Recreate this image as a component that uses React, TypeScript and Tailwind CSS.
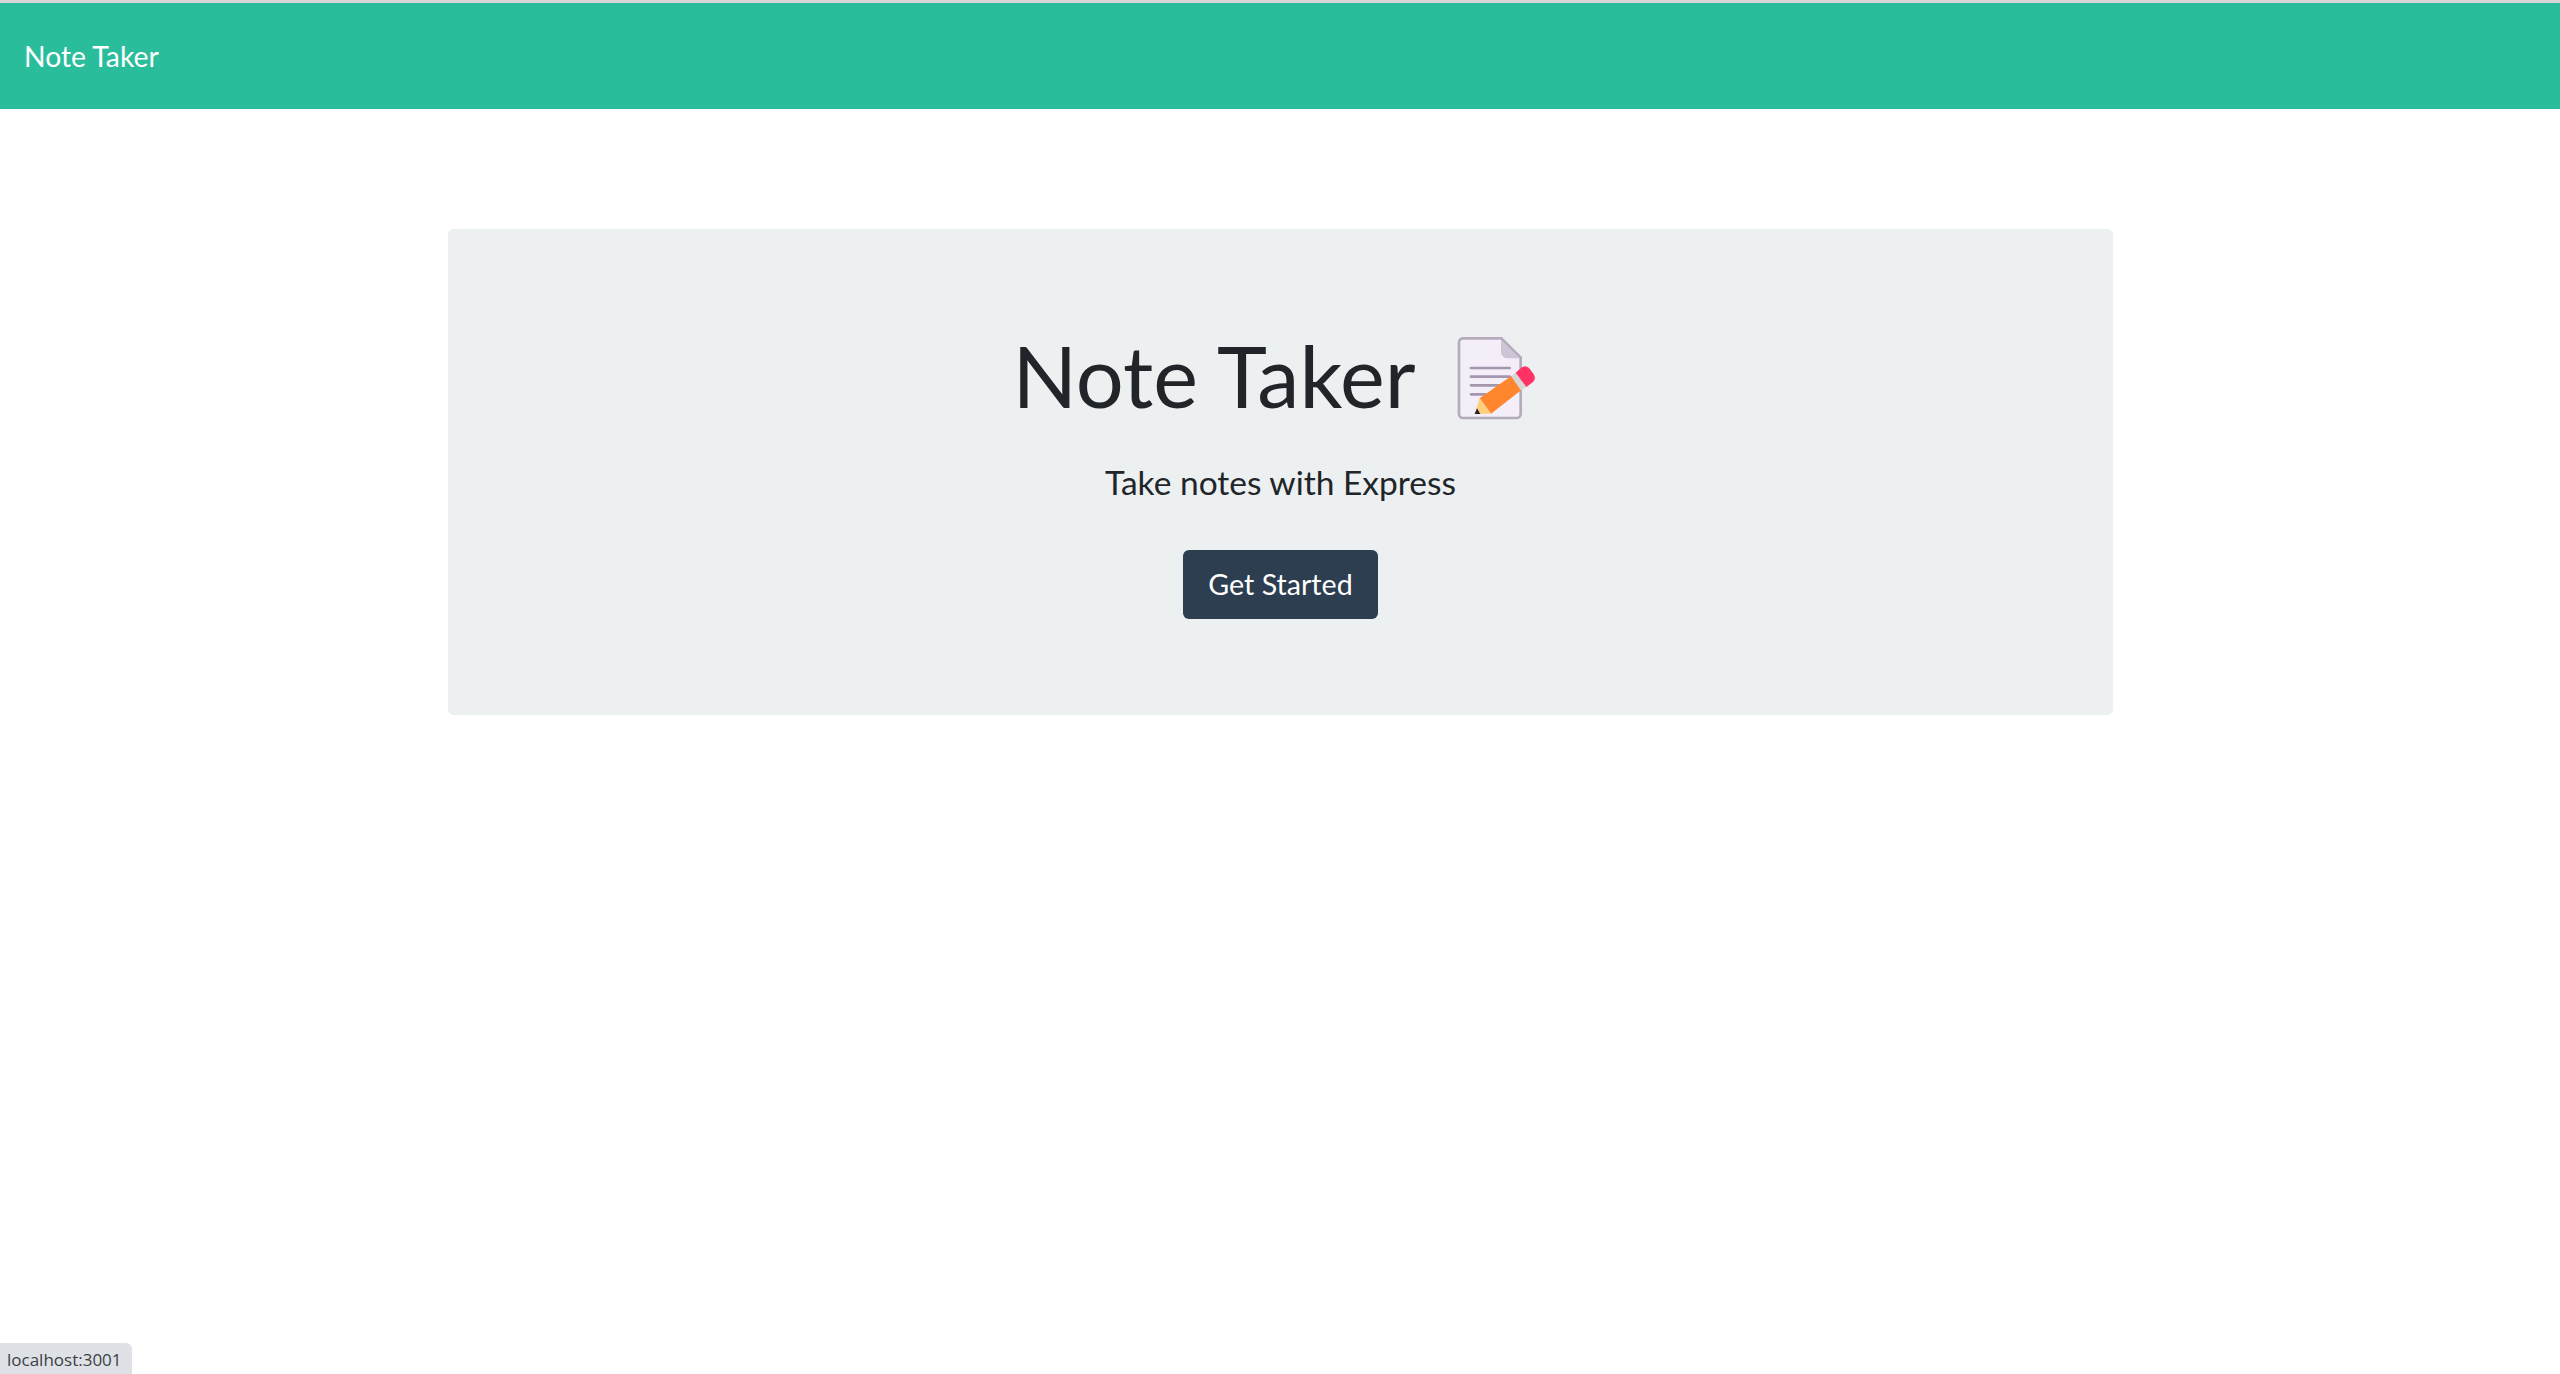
export default function App() {
  return (
    <div className="min-h-screen bg-white font-['Lato',sans-serif]">
      <nav className="flex h-[109px] items-center border-t-[3px] border-[#d6d6d6] bg-[#2abd9c] pl-[24px]">
        <span className="text-[28.3px] leading-none text-white">Note Taker</span>
      </nav>
      <main className="pr-[447px] pl-[448px] pt-[120px]">
        <section className="flex h-[486px] flex-col items-center rounded-[6px] bg-[#ecf0f1] pt-[90px]">
          <h1 className="flex h-[112px] items-center text-[84.7px] leading-none font-normal text-[#212529]">
            <span>Note Taker</span>
            <svg className="mt-[6px] mr-[12px] ml-[41px] h-[85px] w-[80px]" viewBox="80 45 240 255" aria-hidden="true">
              <path d="M98 52 H213 L271 110 V279 a12 12 0 0 1 -12 12 H98 a12 12 0 0 1 -12 -12 V64 a12 12 0 0 1 12 -12 Z" fill="#f3eef8" stroke="#b5abbd" strokeWidth="8" />
              <path d="M212 56 L268 112 H232 a20 20 0 0 1 -20 -20 Z" fill="#cdc5d6" />
              <path d="M122 141 H238 M122 167 H238 M122 193 H210 M122 220 H165" stroke="#a596ae" strokeWidth="8" strokeLinecap="round" />
              <path d="M148 232 L243 165 L272 208 L182 278 Z" fill="#ff862c" />
              <path d="M243 165 L256 155 L288 198 L272 208 Z" fill="#d6d6d6" />
              <path d="M256 155 L272 141 Q284 131 296 141 L310 160 Q318 174 308 183 L288 198 Z" fill="#ff3263" />
              <path d="M148 232 L182 278 L133 279 Z" fill="#ffcf7d" />
              <path d="M140 262 L150 279 L133 279 Z" fill="#2b2230" />
            </svg>
          </h1>
          <p className="mt-[26px] text-[33.5px] leading-[50px] text-[#212529]">Take notes with Express</p>
          <a className="mt-[43px] flex h-[69px] w-[195px] items-center justify-center rounded-[6px] bg-[#2c3e50] text-[28.6px] leading-none text-white" href="#">
            Get Started
          </a>
        </section>
      </main>
      <div className="fixed bottom-0 left-0 flex h-[31px] w-[132px] items-center rounded-tr-[6px] bg-[#dee1e6] pt-[2px] pl-[7px] font-['Open_Sans',sans-serif] text-[17px] leading-none text-[#3c4043]">
        localhost:3001
      </div>
    </div>
  );
}
